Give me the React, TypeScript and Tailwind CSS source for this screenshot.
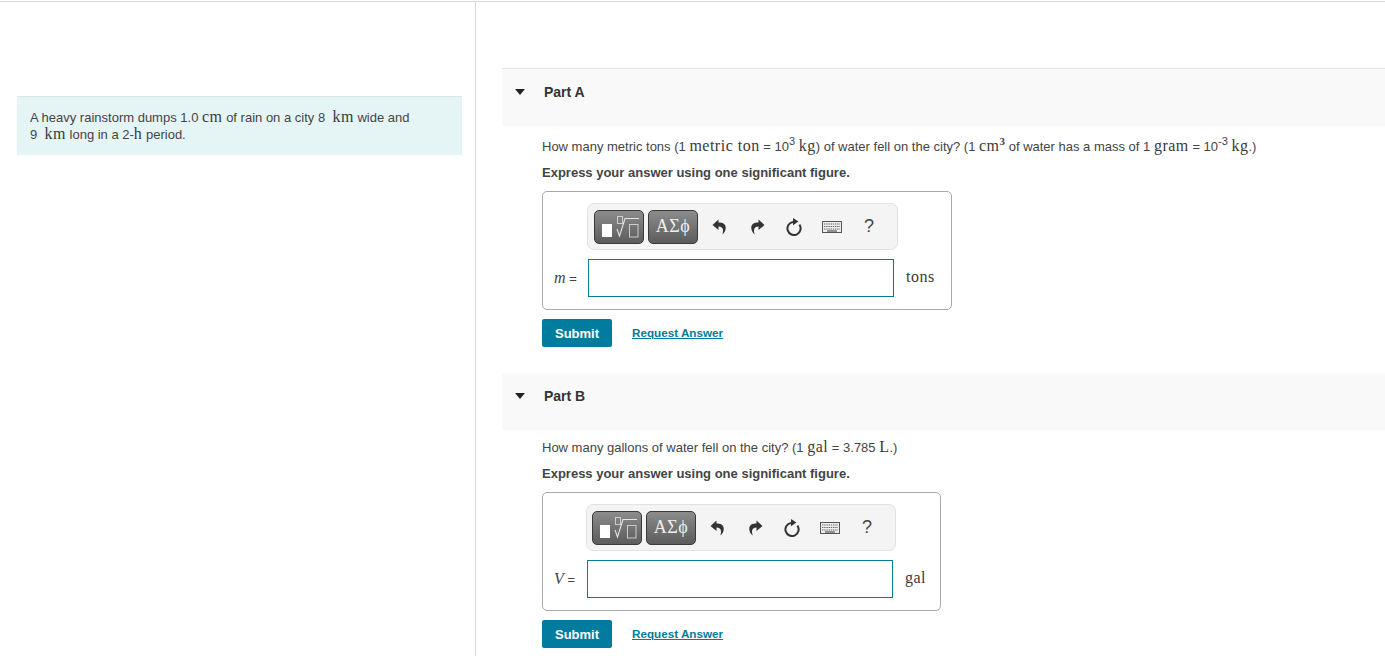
import type { ReactNode } from "react";

const SANS = "font-['Liberation_Sans',sans-serif]";

function M({ children }: { children: ReactNode }) {
  return <span className="font-['Liberation_Serif',serif] text-[16px] tracking-[0.5px] text-[#3a3a3a]">{children}</span>;
}

function Sup({ children, serif }: { children: ReactNode; serif?: boolean }) {
  return (
    <sup className={`relative top-[-1px] align-super text-[11px] leading-none ${serif ? "font-['Liberation_Serif',serif] font-bold" : ""}`}>
      {children}
    </sup>
  );
}

function TemplateIcon() {
  return (
    <svg width="48" height="32" viewBox="0 0 48 32" fill="none">
      <rect x="7" y="13" width="10" height="13" fill="#fff" />
      <rect x="22.5" y="5.5" width="5" height="7" stroke="#ccc" />
      <path d="M22 18l2.5 7L30 7.5h14" stroke="#e4e4e4" strokeWidth="1.1" />
      <rect x="34.5" y="13.5" width="8.5" height="12.5" stroke="#ccc" />
    </svg>
  );
}

function Undo({ flip }: { flip?: boolean }) {
  return (
    <svg width="14" height="16" viewBox="0 0 14 16" className={flip ? "-scale-x-100" : ""}>
      <path d="M6.5 0.5L0.5 6 6.5 11V7.6C9.2 7.6 10.8 8.8 11 11c.1 1.7-.2 3-.8 4.5 2.6-2 3.7-4.6 3.5-7.3C13.4 5 10.6 3.6 6.5 3.6z" fill="#333" />
    </svg>
  );
}

function ResetIcon() {
  return (
    <svg width="17" height="18" viewBox="0 0 17 18" fill="none">
      <path d="M7 3.9A6.6 6.6 0 1 0 13.4 6.6" stroke="#333" strokeWidth="2" />
      <path d="M7 0L12.4 3.6 7 7.2z" fill="#333" />
    </svg>
  );
}

function KeyboardIcon() {
  return (
    <svg width="20" height="12" viewBox="0 0 20 12" fill="none">
      <rect x="0.5" y="0.5" width="19" height="11" fill="#eee" stroke="#555" />
      <path d="M2 3h16M2 5.5h16" stroke="#666" strokeWidth="1.2" strokeDasharray="1.4 .8" />
      <path d="M2 8h16" stroke="#666" strokeWidth="1.2" strokeDasharray="1.4 .8" />
      <path d="M5 10h10" stroke="#555" strokeWidth="1.2" />
    </svg>
  );
}

function ToolButton({ children }: { children: ReactNode }) {
  return (
    <div className="flex h-[34px] w-[50px] items-center justify-center rounded-[5px] border border-[#3a3a3a] bg-gradient-to-b from-[#8c8c8c] to-[#5c5c5c]">
      {children}
    </div>
  );
}

interface PartProps {
  title: string;
  question: ReactNode;
  label: string;
  unit: string;
  boxWidth: string;
  toolbarOffset: string;
  labelWidth: string;
  toolbarClass: string;
  headerClass: string;
  headerPad: string;
  questionGap: string;
}

function Part({ title, question, label, unit, boxWidth, toolbarOffset, labelWidth, toolbarClass, headerClass, headerPad, questionGap }: PartProps) {
  return (
    <section>
      <div className={`border-t bg-[#f9f9f9] ${headerClass}`}>
        <div className={`flex items-center pl-[13px] ${headerPad}`}>
          <div className="h-0 w-0 border-x-[5.5px] border-t-[6px] border-x-transparent border-t-[#222]" />
          <h2 className="ml-[19px] text-[14px] leading-[18px] font-bold text-[#333]">{title}</h2>
        </div>
      </div>
      <div className="pl-[40px]">
        <p className={`h-[20px] text-[13px] leading-[20px] whitespace-nowrap text-[#444] ${questionGap}`}>{question}</p>
        <p className="mt-[7px] text-[13px] leading-[20px] font-bold text-[#444]">
          Express your answer using one significant figure.
        </p>
        <div className={`mt-[8px] rounded-[5px] border border-[#aaa] pt-[11px] pb-[12px] ${boxWidth}`}>
          <div className={`flex items-center ${toolbarOffset}`}>
            <div className={`flex h-[47px] items-center rounded-[7px] border border-[#e2e2e2] bg-[#f4f4f4] ${toolbarClass}`}>
              <ToolButton><TemplateIcon /></ToolButton>
              <div className="ml-[4px]">
                <ToolButton>
                  <span className="font-['Liberation_Serif',serif] text-[18px] tracking-[0.5px] text-[#eee]">ΑΣϕ</span>
                </ToolButton>
              </div>
              <div className="ml-[14px] flex w-[14px] justify-center"><Undo /></div>
              <div className="ml-[25px] flex w-[14px] justify-center"><Undo flip /></div>
              <div className="ml-[21px]"><ResetIcon /></div>
              <div className="ml-[19px]"><KeyboardIcon /></div>
              <span className="ml-[22px] text-[18px] text-[#444]">?</span>
            </div>
          </div>
          <div className="mt-[9px] flex items-center">
            <div className={`shrink-0 pl-[11px] text-[13px] whitespace-nowrap text-[#444] ${labelWidth}`}>
              <i className="font-['Liberation_Serif',serif] text-[16px]">{label}</i> =
            </div>
            <div className="h-[38px] w-[306px] shrink-0 border border-[#007a9c] bg-white" />
            <span className="-mt-[2px] ml-[12px] font-['Liberation_Serif',serif] text-[16px] tracking-[0.5px] text-[#3a3a3a]">{unit}</span>
          </div>
        </div>
        <div className="mt-[9px] flex items-center">
          <button className="h-[28px] w-[70px] rounded-[2px] bg-[#007c9e] pt-[1px] text-[13px] font-bold text-white">Submit</button>
          <a className="ml-[20px] text-[11.7px] font-bold text-[#007c9e] underline">Request Answer</a>
        </div>
      </div>
    </section>
  );
}

export default function App() {
  return (
    <div className={`flex h-screen overflow-hidden bg-white ${SANS}`}>
      <div className="mt-[1px] w-[476px] shrink-0 border-t border-r border-[#d9d9d9] pt-[94px] pl-[17px]">
        <div className="h-[59px] w-[445px] border-t border-[#dde5e8] bg-[#e5f5f6] px-[13px] pt-[12px] text-[13px] leading-[16px] text-[#444]">
          <p>
            A heavy rainstorm dumps 1.0 <M>cm</M> of rain on a city 8 &nbsp;<M>km</M> wide and
          </p>
          <p>
            9 &nbsp;<M>km</M> long in a 2-<M>h</M> period.
          </p>
        </div>
      </div>
      <div className="mt-[1px] min-w-0 flex-1 border-t border-[#d9d9d9] pt-[66px] pl-[26px]">
        <Part
          title="Part A"
          question={
            <>
              How many metric tons (1 <M>metric ton</M> = 10<Sup>3</Sup> <M>kg</M>) of water fell on the city? (1 <M>cm</M>
              <Sup serif>3</Sup> of water has a mass of 1 <M>gram</M> = 10<Sup>-3</Sup> <M>kg</M>.)
            </>
          }
          label="m"
          unit="tons"
          boxWidth="w-[410px]"
          toolbarOffset="pl-[44px]"
          labelWidth="w-[45px]"
          toolbarClass="w-[311px] pl-[6px]"
          headerClass="h-[58px] border-[#e4e4e4]"
          headerPad="pt-[14px]"
          questionGap="mt-[10px]"
        />
        <div className="h-[26px]" />
        <Part
          title="Part B"
          question={
            <>
              How many gallons of water fell on the city? (1 <M>gal</M> = 3.785 <M>L</M>.)
            </>
          }
          label="V"
          unit="gal"
          boxWidth="w-[399px]"
          toolbarOffset="pl-[43px]"
          labelWidth="w-[44px]"
          toolbarClass="w-[310px] pl-[5px]"
          headerClass="h-[57px] border-transparent"
          headerPad="pt-[13px]"
          questionGap="mt-[7px]"
        />
      </div>
    </div>
  );
}
